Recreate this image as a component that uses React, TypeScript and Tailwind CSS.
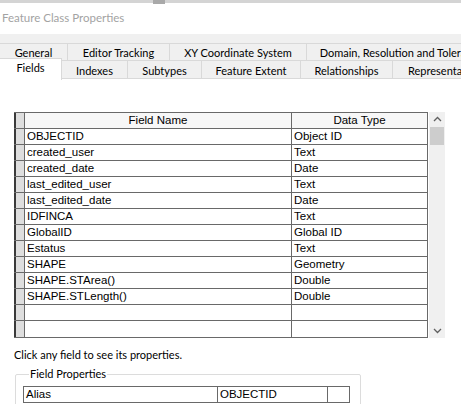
import React from 'react';

const rowOneTabs = [
  { label: 'General', w: 'w-[68px]' },
  { label: 'Editor Tracking', w: 'w-[102px]' },
  { label: 'XY Coordinate System', w: 'w-[137px]' },
  { label: 'Domain, Resolution and Tolerance', w: 'w-[190px]' },
];

const rowTwoTabs = [
  { label: 'Indexes', w: 'w-[66px]' },
  { label: 'Subtypes', w: 'w-[74px]' },
  { label: 'Feature Extent', w: 'w-[99px]' },
  { label: 'Relationships', w: 'w-[92px]' },
];

const fields = [
  ['OBJECTID', 'Object ID'],
  ['created_user', 'Text'],
  ['created_date', 'Date'],
  ['last_edited_user', 'Text'],
  ['last_edited_date', 'Date'],
  ['IDFINCA', 'Text'],
  ['GlobalID', 'Global ID'],
  ['Estatus', 'Text'],
  ['SHAPE', 'Geometry'],
  ['SHAPE.STArea()', 'Double'],
  ['SHAPE.STLength()', 'Double'],
  ['', ''],
  ['', ''],
];

function RowHeader() {
  return <div className="w-[11px] shrink-0 border-l-2 border-r border-l-[#3a3a3a] border-r-[#696969] bg-[#dedede]" />;
}

export default function App() {
  return (
    <div className="w-[461px] h-[404px] overflow-hidden bg-white font-['Lato',sans-serif] text-black">
      {/* top edge of window behind */}
      <div className="h-[4px] flex items-start">
        <div className="w-[153px] h-[3px] bg-[#d4d4d4]" />
        <div className="w-[12px] h-[4px] bg-[#a9a9a9]" />
        <div className="flex-1 h-[3px] bg-[#d4d4d4]" />
      </div>

      <div className="h-[30px] pl-[2px] pt-[6px] text-[11.5px] leading-[16px] text-[#a3a3a3]">Feature Class Properties</div>

      {/* tabs */}
      <div className="bg-[#f0f0f0] pt-[9px] text-[11px] leading-none">
        <div className="flex h-[17px] whitespace-nowrap">
          {rowOneTabs.map((t) => (
            <div
              key={t.label}
              className={`${t.w} shrink-0 flex items-center justify-center pt-[1px] border-t border-r border-[#d9d9d9]`}
            >
              {t.label}
            </div>
          ))}
        </div>
        <div className="flex h-[19px] whitespace-nowrap">
          <div className="relative z-10 w-[62px] shrink-0 h-[22px] -mt-[2px] bg-white border-t border-r border-[#d9d9d9] flex items-start justify-center pt-[3px]">
            Fields
          </div>
          {rowTwoTabs.map((t) => (
            <div
              key={t.label}
              className={`${t.w} shrink-0 flex items-center justify-center pt-[1px] border-t border-r border-b border-[#d9d9d9]`}
            >
              {t.label}
            </div>
          ))}
          <div className="w-[110px] shrink-0 flex items-center pl-[15px] pt-[1px] border-t border-b border-[#d9d9d9]">
            Representations
          </div>
        </div>
      </div>

      {/* panel */}
      <div className="pt-[33px] pl-[14px]">
        <div className="flex">
          <div className="w-[414px] border-t border-b border-[#696969] font-['Liberation_Sans',Arial,sans-serif] text-[11.5px] leading-none">
            <div className="flex h-[16px] border-b border-[#696969]">
              <RowHeader />
              <div className="w-[267px] shrink-0 border-r border-[#696969] bg-[#f7f7f7] flex items-center justify-center">
                Field Name
              </div>
              <div className="flex-1 border-r border-[#696969] bg-[#f7f7f7] flex items-center justify-center">Data Type</div>
            </div>
            {fields.map(([name, type], i) => (
              <div key={i} className={`flex h-[16px] ${i < fields.length - 1 ? 'border-b border-[#696969]' : ''}`}>
                <RowHeader />
                <div className="w-[267px] shrink-0 border-r border-[#696969] flex items-center pl-[2px]">{name}</div>
                <div className="flex-1 border-r border-[#696969] flex items-center pl-[2px]">{type}</div>
              </div>
            ))}
          </div>
          {/* scrollbar */}
          <div className="w-[16px] ml-[1px] bg-[#f0f0f0] flex flex-col items-center">
            <svg width="9" height="6" viewBox="0 0 9 6" className="mt-[4px]">
              <path d="M1 5 L4.5 1.5 L8 5" fill="none" stroke="#606060" strokeWidth="1.3" />
            </svg>
            <div className="mt-[5px] w-[14px] h-[18px] bg-[#cdcdcd]" />
            <div className="flex-1" />
            <svg width="9" height="6" viewBox="0 0 9 6" className="mb-[4px]">
              <path d="M1 1 L4.5 4.5 L8 1" fill="none" stroke="#606060" strokeWidth="1.3" />
            </svg>
          </div>
        </div>

        <div className="mt-[9px] text-[11px] leading-[16px]">Click any field to see its properties.</div>

        <fieldset className="mt-[4px] ml-[1px] w-[346px] h-[60px] border border-[#dcdcdc] rounded-[2px] pl-[7px]">
          <legend className="ml-[6px] px-[1px] text-[11px] leading-[14px]">Field Properties</legend>
          <div className="mt-[5px] flex h-[17px] border border-[#696969] w-[327px] font-['Liberation_Sans',Arial,sans-serif] text-[11.5px]">
            <div className="w-[194px] shrink-0 border-r border-[#696969] flex items-center pl-[2px]">Alias</div>
            <div className="w-[110px] shrink-0 border-r border-[#696969] flex items-center pl-[2px]">OBJECTID</div>
            <div className="flex-1" />
          </div>
        </fieldset>
      </div>
    </div>
  );
}
